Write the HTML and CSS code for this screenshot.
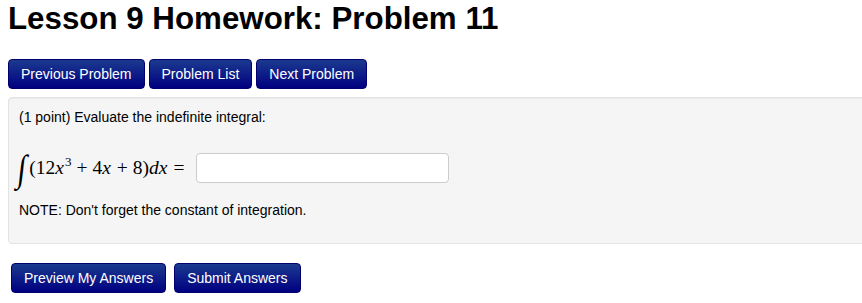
FILE: index.html
```html
<!DOCTYPE html>
<html>
<head>
<meta charset="utf-8">
<link rel="stylesheet" href="styles.css">
</head>
<body>
<h1 class="title">Lesson 9 Homework: Problem 11</h1>
<div class="nav">
  <a class="btn">Previous Problem</a>
  <a class="btn">Problem List</a>
  <a class="btn">Next Problem</a>
</div>
<div class="well">
  <p class="line">(1 point) Evaluate the indefinite integral:</p>
  <div class="math-row">
    <span class="math"><span class="int">∫</span><span class="expr">(12<i>x</i><sup>3</sup><span class="op">+</span>4<i>x</i><span class="op">+</span>8)<i>dx</i><span class="op">=</span></span></span>
    <input class="answer" type="text">
  </div>
  <p class="line note">NOTE: Don't forget the constant of integration.</p>
</div>
<div class="submit">
  <a class="btn">Preview My Answers</a>
  <a class="btn">Submit Answers</a>
</div>
</body>
</html>
```
FILE: styles.css
```css
html, body {
  margin: 0;
  padding: 0;
  background: #fff;
  overflow: hidden;
}
body {
  padding: 2px 8px 0 8px;
  font-family: "Liberation Sans", Arial, sans-serif;
  font-size: 14px;
  color: #000;
}
.title {
  margin: 0;
  font-size: 31.3px;
  line-height: 34px;
  font-weight: bold;
}
.nav {
  display: flex;
  gap: 4px;
  margin-top: 23px;
}
.btn {
  display: inline-flex;
  align-items: center;
  box-sizing: border-box;
  height: 30px;
  padding: 0 12px;
  border: 1px solid #00006e;
  border-radius: 4px;
  background: linear-gradient(to bottom, #1b3a8f, #000080);
  color: #fff;
  font-size: 14px;
  text-decoration: none;
  white-space: nowrap;
}
.well {
  margin-top: 8px;
  margin-right: -20px;
  padding: 9px 10px 23px 10px;
  background: #f5f5f5;
  border: 1px solid #e3e3e3;
  border-radius: 4px;
  box-shadow: inset 0 1px 1px rgba(0,0,0,0.05);
}
.line {
  margin: 0;
  line-height: 20px;
}
.math-row {
  display: flex;
  align-items: center;
  height: 36px;
  margin: 23px 0 14px 0;
}
.math {
  display: flex;
  align-items: center;
  font-family: "Liberation Serif", "Times New Roman", serif;
  font-size: 19.5px;
  margin-left: -1px;
}
.int {
  font-size: 30px;
  line-height: 36px;
  display: inline-block;
  transform: scaleY(1.25) skewX(-8deg);
  margin-right: 3px;
}
.expr i {
  font-style: italic;
  margin-right: 1px;
}
.expr sup {
  font-size: 13px;
  line-height: 0;
  vertical-align: 8px;
}
.op {
  margin: 0 5px;
}
.answer {
  box-sizing: border-box;
  width: 253px;
  height: 30px;
  margin-left: 7px;
  border: 1px solid #ccc;
  border-radius: 4px;
  background: #fff;
  padding: 4px 6px;
  font-size: 14px;
}
.submit {
  display: flex;
  gap: 8px;
  margin-top: 19px;
  padding-left: 3px;
}
```
